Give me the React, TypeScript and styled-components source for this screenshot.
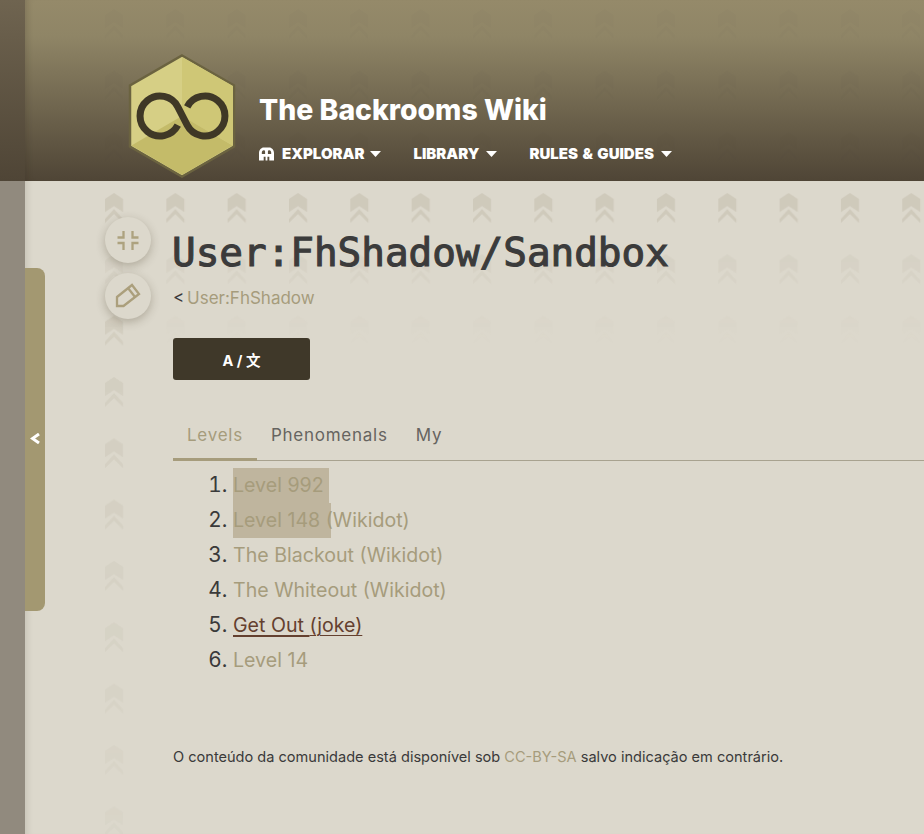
import React from 'react';
import styled, { createGlobalStyle } from 'styled-components';

const GlobalStyle = createGlobalStyle`
    html, body {
        margin: 0;
        padding: 0;
        height: 100%;
        overflow: hidden;
        background: #dcd8cc;
        font-family: 'Inter', 'Noto Sans CJK SC', sans-serif;
    }
`;

const TILE = 61.33;

function Chevrons({ id, y, color }: { id: string; y: number; color: string }) {
    return (
        <svg width='100%' height='100%'>
            <defs>
                <pattern id={id} x={0} y={y} width={TILE} height={TILE} patternUnits='userSpaceOnUse'>
                    <path d='M9 0L18 6V19L9 13L0 19V6Z' fill={color} />
                    <path d='M9 16L18 26V30L9 21L0 30V26Z' fill={color} />
                </pattern>
            </defs>
            <rect width='100%' height='100%' fill={`url(#${id})`} />
        </svg>
    );
}

function Logo() {
    return (
        <svg width='108' height='124' viewBox='0 0 108 124'>
            <path d='M54 1.500L106 31.500V92.500L54 122.500L2 92.500V31.500Z' fill='#d6cf85' stroke='#6b6340' strokeWidth='2.500' />
            <path d='M54 3L105 32V91.500L54 62Z' fill='#cfc776' />
            <path d='M54 62L104.500 91.500L54 121L3.500 91.500Z' fill='#c4bb69' />
            <path
                d='M49.800 71.200A20 20 0 1 1 49.800 52.800L59.200 71.200A20 20 0 1 0 59.200 52.800'
                fill='none'
                stroke='#3f3826'
                strokeWidth='7'
            />
        </svg>
    );
}

function NavIcon() {
    return (
        <svg width='15' height='14' viewBox='0 0 16 14'>
            <path
                fillRule='evenodd'
                d='M0 14V6C0 2.500 2.500 0 5 0H11C13.500 0 16 2.500 16 6V14H11V10H9V14H7V10H5V14ZM3 7H6.500V4.500C6.500 3.500 5.800 3 5 3C3.800 3 3 4.200 3 5.500ZM9.500 7H13V5.500C13 4.200 12.200 3 11 3C10.200 3 9.500 3.500 9.500 4.500Z'
                fill='#fff'
            />
        </svg>
    );
}

function ShrinkIcon() {
    return (
        <svg width='22' height='19' viewBox='0 0 22 19' fill='none' stroke='#ada27f' strokeWidth='2.300'>
            <path d='M6.500 0V6.500H0.500' />
            <path d='M15.500 0V6.500H21.500' />
            <path d='M0.500 12H6.500V19' />
            <path d='M21.500 12H15.500V19' />
        </svg>
    );
}

function PencilIcon() {
    return (
        <svg width='26' height='26' viewBox='0 0 26 26' fill='none' stroke='#ab9f7c' strokeWidth='2.300'>
            <path d='M2 14L17 2L24 11L8.500 23H2Z' />
            <path d='M13 5L20 14' />
        </svg>
    );
}

function Caret() {
    return (
        <svg width='11' height='6' viewBox='0 0 11 6'>
            <path d='M0 0H11L5.500 6Z' fill='#fff' />
        </svg>
    );
}

export default function App() {
    return (
        <>
            <GlobalStyle />
            <Page>
                <Rail />
                <Main>
                    <Header>
                        <HeaderPattern>
                            <Chevrons id='head-pattern' y={9} color='rgba(60,50,30,0.025)' />
                        </HeaderPattern>
                        <LogoSlot>
                            <Logo />
                        </LogoSlot>
                        <Brand>
                            <SiteName>The Backrooms Wiki</SiteName>
                            <Nav>
                                <NavItem>
                                    <NavIcon />
                                    <NavLabel $first>EXPLORAR</NavLabel>
                                    <Caret />
                                </NavItem>
                                <NavItem>
                                    <NavLabel>LIBRARY</NavLabel>
                                    <Caret />
                                </NavItem>
                                <NavItem>
                                    <NavLabel>RULES &amp; GUIDES</NavLabel>
                                    <Caret />
                                </NavItem>
                            </Nav>
                        </Brand>
                    </Header>
                    <Content>
                        <ContentPattern>
                            <Chevrons id='body-pattern' y={12} color='rgba(120,110,80,0.13)' />
                        </ContentPattern>
                        <ColumnPattern>
                            <Chevrons id='column-pattern' y={12} color='rgba(120,110,80,0.09)' />
                        </ColumnPattern>
                        <SideTab>
                            <svg width='10' height='11' viewBox='0 0 10 11'>
                                <path d='M9 1L2.500 5.500L9 10' fill='none' stroke='#fff' strokeWidth='3' />
                            </svg>
                        </SideTab>
                        <RoundButton $top={36}>
                            <ShrinkIcon />
                        </RoundButton>
                        <RoundButton $top={92}>
                            <PencilIcon />
                        </RoundButton>
                        <Article>
                            <Title>User:FhShadow/Sandbox</Title>
                            <Breadcrumb>
                                &lt; <SoftLink>User:FhShadow</SoftLink>
                            </Breadcrumb>
                            <LangButton>A / 文</LangButton>
                            <Tabs>
                                <Tab $active>Levels</Tab>
                                <Tab>Phenomenals</Tab>
                                <Tab>My</Tab>
                            </Tabs>
                            <Levels>
                                <li><Marked>Level 992</Marked></li>
                                <li><Marked>Level 148 </Marked><SoftLink>(Wikidot)</SoftLink></li>
                                <li><SoftLink>The Blackout (Wikidot)</SoftLink></li>
                                <li><SoftLink>The Whiteout (Wikidot)</SoftLink></li>
                                <li><Missing $thick>Get Out </Missing><Missing>(joke)</Missing></li>
                                <li><SoftLink>Level 14</SoftLink></li>
                            </Levels>
                            <Licence>
                                O conteúdo da comunidade está disponível sob <SoftLink>CC-BY-SA</SoftLink> salvo indicação em contrário.
                            </Licence>
                        </Article>
                    </Content>
                </Main>
            </Page>
        </>
    );
}

const Page = styled.div`
    display: flex;
    width: 924px;
    height: 834px;
    overflow: hidden;
`;

const Rail = styled.div`
    width: 25px;
    flex: none;
    background: linear-gradient(180deg, #6f6450 0, #4f4536 181px, #918a7e 181px);
`;

const Main = styled.div`
    flex: 1;
    display: flex;
    flex-direction: column;
    min-width: 0;
`;

const Header = styled.header`
    position: relative;
    height: 181px;
    flex: none;
    display: flex;
    background: linear-gradient(180deg, #958a6a 0%, #8f8566 20%, #4f4536 100%);
    box-shadow: inset 7px 0 6px -5px rgba(40, 30, 15, 0.18);
    overflow: hidden;
`;

const HeaderPattern = styled.div`
    position: absolute;
    inset: 0 0 0 80px;
`;

const LogoSlot = styled.div`
    position: relative;
    margin: 54px 0 0 103px;
`;

const Brand = styled.div`
    position: relative;
    display: flex;
    flex-direction: column;
    margin: 93px 0 0 23px;
`;

const SiteName = styled.div`
    font-weight: 800;
    font-size: 28.400px;
    line-height: 34px;
    color: #fff;
`;

const Nav = styled.nav`
    display: flex;
    gap: 32px;
    margin-top: 17px;
`;

const NavItem = styled.div`
    display: flex;
    align-items: center;
    gap: 7px;
`;

const NavLabel = styled.span<{ $first?: boolean }>`
    font-weight: 900;
    font-size: 15px;
    line-height: 20px;
    word-spacing: 1.500px;
    color: #fff;
    margin: ${(p) => (p.$first ? '0 -1px 0 1px' : '0')};
`;

const Content = styled.main`
    position: relative;
    flex: 1;
    background: #dcd8cc;
    box-shadow: inset 7px 0 6px -5px rgba(40, 30, 15, 0.12);
`;

const ContentPattern = styled.div`
    position: absolute;
    inset: 0 0 0 80px;
    mask-image: linear-gradient(180deg, #000 42px, rgba(0, 0, 0, 0.4) 75px, rgba(0, 0, 0, 0.3) 103px, rgba(0, 0, 0, 0.12) 135px, transparent 165px);
`;

const ColumnPattern = styled.div`
    position: absolute;
    left: 80px;
    top: 0;
    bottom: 0;
    width: 20px;
    mask-image: linear-gradient(180deg, transparent 110px, #000 130px, rgba(0, 0, 0, 0.3) 653px);
`;

const SideTab = styled.div`
    position: absolute;
    left: 0;
    top: 87px;
    width: 20px;
    height: 343px;
    padding-bottom: 2px;
    box-sizing: border-box;
    display: flex;
    align-items: center;
    justify-content: center;
    background: #a39871;
    border-radius: 0 8px 8px 0;
`;

const RoundButton = styled.div<{ $top: number }>`
    position: absolute;
    left: 80px;
    top: ${(p) => p.$top}px;
    width: 46px;
    height: 46px;
    display: flex;
    align-items: center;
    justify-content: center;
    border-radius: 50%;
    background: #dcd8cc;
    box-shadow: 0 3px 10px rgba(60, 50, 30, 0.28);
`;

const Article = styled.article`
    position: relative;
    display: flex;
    flex-direction: column;
    align-items: flex-start;
    padding: 48px 0 0 148px;
`;

const Title = styled.h1`
    margin: 0 0 0 -1px;
    font-family: 'DejaVu Sans Mono', monospace;
    font-weight: 400;
    font-size: 39.300px;
    line-height: 48px;
    color: #3b3b3b;
    -webkit-text-stroke: 1.100px #3b3b3b;
`;

const Breadcrumb = styled.div`
    margin-top: 10px;
    font-size: 17px;
    line-height: 22px;
    color: #3a3a3a;
    word-spacing: -2px;
`;

const SoftLink = styled.span`
    color: #a69c7c;
`;

const LangButton = styled.div`
    width: 137px;
    height: 42px;
    margin-top: 29px;
    display: flex;
    align-items: center;
    justify-content: center;
    border-radius: 3px;
    background: #3f3829;
    color: #fff;
    font-weight: 700;
    font-size: 14.500px;
`;

const Tabs = styled.div`
    display: flex;
    align-self: stretch;
    margin-top: 34px;
    border-bottom: 1px solid #a8a28f;
`;

const Tab = styled.div<{ $active?: boolean }>`
    padding: 10px 14px 12px;
    margin-bottom: -1px;
    font-size: 17px;
    line-height: 22px;
    letter-spacing: 0.750px;
    color: ${(p) => (p.$active ? '#a69c7c' : '#666460')};
    border-bottom: 3px solid ${(p) => (p.$active ? '#a69c7c' : 'transparent')};
`;

const Levels = styled.ol`
    margin: 6px 0 0;
    padding: 0 0 0 60px;
    font-size: 19.600px;
    line-height: 35px;
    color: #3a3a3a;

    li {
        height: 35px;
    }

    li::marker {
        font-size: 20.800px;
    }
`;

const Marked = styled.span`
    display: inline-block;
    white-space: pre;
    padding-right: 5px;
    margin-right: -5px;
    background: #bfb59e;
    color: #a69c7c;
`;

const Missing = styled.span<{ $thick?: boolean }>`
    white-space: pre;
    color: #64402f;
    text-decoration: underline;
    text-decoration-thickness: ${(p) => (p.$thick ? '2px' : '1px')};
    text-underline-offset: 3px;
`;

const Licence = styled.p`
    margin: 69px 0 0;
    font-size: 14.570px;
    line-height: 22px;
    color: #3a3a3a;
`;
